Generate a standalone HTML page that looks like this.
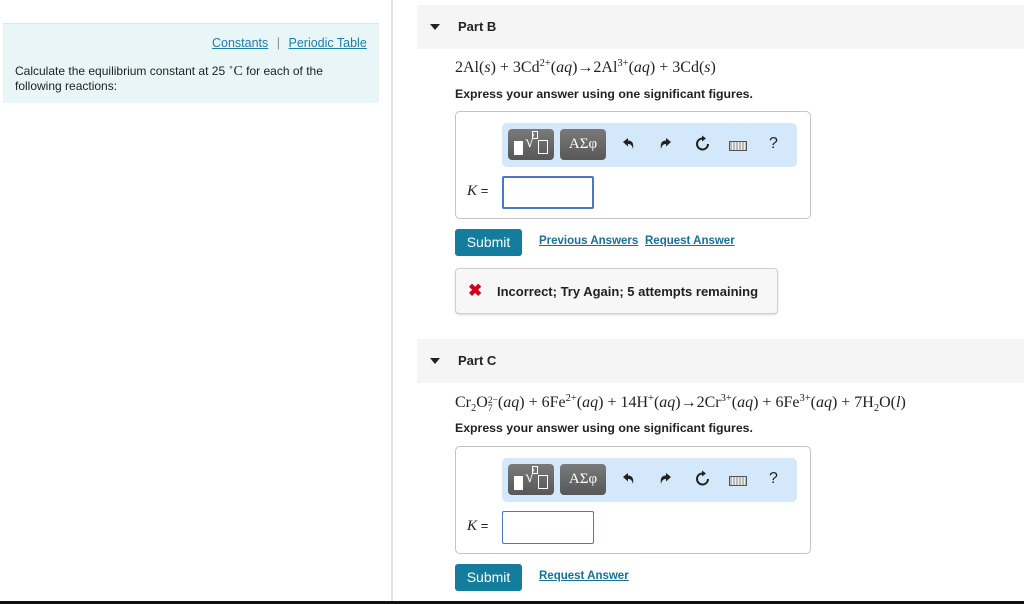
<!DOCTYPE html>
<html><head><meta charset="utf-8"><style>
*{margin:0;padding:0;box-sizing:border-box}
body{width:1024px;height:604px;background:#fff;font-family:"Liberation Sans",Arial,sans-serif;position:relative;overflow:hidden;color:#222}
.abs{position:absolute}
.left{left:3px;top:23px;width:376px;height:80px;background:#e8f6f7;border-top:1px solid #d6e8ea}
.lnk{color:#1a7fa8;text-decoration:underline}
.div{left:391px;top:0;width:2px;height:601px;background:#dde3ec}
.bot{left:0;top:601px;width:1024px;height:3px;background:#111}
.hdr{left:417px;width:607px;height:44px;background:#f5f5f5}
.tri{width:0;height:0;border-left:5px solid transparent;border-right:5px solid transparent;border-top:6px solid #222}
.ptitle{font-weight:bold;font-size:13px}
.eq{font-family:"Liberation Serif",serif;font-size:16px;white-space:nowrap}
.eq sup{font-size:10.5px;vertical-align:6px;line-height:0}
.eq sub{font-size:10.5px;line-height:0}
.eq i{font-style:italic}
.exp{font-weight:bold;font-size:12.3px}
.box{left:455px;width:356px;height:108px;border:1px solid #c4c4c4;border-radius:5px;background:#fff}
.tb{left:46px;top:11px;width:295px;height:44px;background:#d3e8fb;border-radius:5px}
.btn{top:6px;width:46px;height:31px;border-radius:4px;background:linear-gradient(#7a7a7a,#575757);color:#fff}
.ic{top:12px;font-size:17px;color:#222}
.k{left:11px;font-family:"Liberation Serif",serif;font-style:italic;font-size:15px}
.inp{left:46px;width:92px;height:33px;border:2px solid #4a78c9;border-radius:2px;background:#fff}
.sub{left:455px;width:67px;height:27px;background:#147c9c;border-radius:3px;color:#fff;font-size:14px;text-align:center;line-height:27px}
.al{font-weight:bold;font-size:11.5px;color:#1a6f96;text-decoration:underline}
</style></head><body>
<div class="abs left">
 <div class="abs" style="left:209px;top:12px;font-size:12.5px"><span class="lnk">Constants</span> <span style="color:#888;margin:0 5px">|</span> <span class="lnk">Periodic Table</span></div>
 <div class="abs" style="left:12px;top:36px;font-size:12px;line-height:15px;color:#222">Calculate the equilibrium constant at 25 <sup style="font-size:8px">∘</sup><span style="font-family:'Liberation Serif',serif;font-size:14px">C</span> for each of the<br>following reactions:</div>
</div>
<div class="abs div"></div>
<div class="abs bot"></div>

<!-- Part B -->
<div class="abs hdr" style="top:5px"><div class="abs tri" style="left:13px;top:19px"></div><div class="abs ptitle" style="left:41px;top:14px">Part B</div></div>
<div class="abs eq" style="left:455px;top:59px">2Al(<i>s</i>) + 3Cd<sup>2+</sup>(<i>aq</i>)→2Al<sup>3+</sup>(<i>aq</i>) + 3Cd(<i>s</i>)</div>
<div class="abs exp" style="left:455px;top:87px">Express your answer using one significant figures.</div>
<div class="abs box" style="top:111px">
 <div class="abs tb">
  <div class="abs btn" style="left:6px"><div class="abs" style="left:6px;top:12px;width:9px;height:14px;background:#fff"></div><div class="abs" style="left:17px;top:3px;font-size:17px;font-family:'Liberation Serif',serif">√</div><div class="abs" style="left:24px;top:2px;width:6px;height:8px;border:1px solid #fff"></div><div class="abs" style="left:30px;top:11px;width:10px;height:14px;border:1px solid #fff"></div></div>
  <div class="abs btn" style="left:58px;font-family:'Liberation Serif',serif;font-size:15px;text-align:center;line-height:31px">ΑΣφ</div>
  <svg class="abs" style="left:120px;top:14px" width="14" height="14" viewBox="0 0 14 14"><path d="M1 5 L6 1 L6 3.5 C10 3.5 12 6 11 12 C10 8 8.5 7 6 7 L6 9.5 Z" fill="#222"/></svg>
  <svg class="abs" style="left:156px;top:14px" width="14" height="14" viewBox="0 0 14 14"><path d="M13 5 L8 1 L8 3.5 C4 3.5 2 6 3 12 C4 8 5.5 7 8 7 L8 9.5 Z" fill="#222"/></svg>
  <svg class="abs" style="left:192px;top:12px" width="18" height="18" viewBox="0 0 18 18"><path d="M14 9 A5.5 5.5 0 1 1 9 3.5" fill="none" stroke="#222" stroke-width="2"/><path d="M8 0.5 L12 3.5 L8 6.5 Z" fill="#222"/></svg>
  <div class="abs" style="left:227px;top:18px;width:18px;height:10px;border:1px solid #555;background:repeating-linear-gradient(90deg,#bbb 0 2px,#eee 2px 3px)"></div>
  <div class="abs ic" style="left:267px;font-size:16px">?</div>
 </div>
 <div class="abs k" style="top:71px">K <span style="font-style:normal;font-family:'Liberation Sans';font-size:13px">=</span></div>
 <div class="abs inp" style="top:64px"></div>
</div>
<div class="abs sub" style="top:229px">Submit</div>
<div class="abs al" style="left:539px;top:235px">Previous Answers</div>
<div class="abs al" style="left:645px;top:235px">Request Answer</div>
<div class="abs" style="left:455px;top:268px;width:323px;height:46px;border:1px solid #d0d0d0;border-radius:4px;background:#f7f7f7;box-shadow:0 1px 2px rgba(0,0,0,.15)">
 <div class="abs" style="left:12px;top:12px;color:#d0021b;font-weight:bold;font-size:17px">✖</div>
 <div class="abs" style="left:41px;top:15px;font-weight:bold;font-size:13px">Incorrect; Try Again; 5 attempts remaining</div>
</div>

<!-- Part C -->
<div class="abs hdr" style="top:339px"><div class="abs tri" style="left:13px;top:19px"></div><div class="abs ptitle" style="left:41px;top:14px">Part C</div></div>
<div class="abs eq" style="left:455px;top:394px">Cr<sub>2</sub>O<span style="display:inline-block;font-size:9.5px;line-height:8px;vertical-align:-4px;text-align:left">2−<br>7</span>(<i>aq</i>) + 6Fe<sup>2+</sup>(<i>aq</i>) + 14H<sup>+</sup>(<i>aq</i>)→2Cr<sup>3+</sup>(<i>aq</i>) + 6Fe<sup>3+</sup>(<i>aq</i>) + 7H<sub>2</sub>O(<i>l</i>)</div>
<div class="abs exp" style="left:455px;top:421px">Express your answer using one significant figures.</div>
<div class="abs box" style="top:446px">
 <div class="abs tb">
  <div class="abs btn" style="left:6px"><div class="abs" style="left:6px;top:12px;width:9px;height:14px;background:#fff"></div><div class="abs" style="left:17px;top:3px;font-size:17px;font-family:'Liberation Serif',serif">√</div><div class="abs" style="left:24px;top:2px;width:6px;height:8px;border:1px solid #fff"></div><div class="abs" style="left:30px;top:11px;width:10px;height:14px;border:1px solid #fff"></div></div>
  <div class="abs btn" style="left:58px;font-family:'Liberation Serif',serif;font-size:15px;text-align:center;line-height:31px">ΑΣφ</div>
  <svg class="abs" style="left:120px;top:14px" width="14" height="14" viewBox="0 0 14 14"><path d="M1 5 L6 1 L6 3.5 C10 3.5 12 6 11 12 C10 8 8.5 7 6 7 L6 9.5 Z" fill="#222"/></svg>
  <svg class="abs" style="left:156px;top:14px" width="14" height="14" viewBox="0 0 14 14"><path d="M13 5 L8 1 L8 3.5 C4 3.5 2 6 3 12 C4 8 5.5 7 8 7 L8 9.5 Z" fill="#222"/></svg>
  <svg class="abs" style="left:192px;top:12px" width="18" height="18" viewBox="0 0 18 18"><path d="M14 9 A5.5 5.5 0 1 1 9 3.5" fill="none" stroke="#222" stroke-width="2"/><path d="M8 0.5 L12 3.5 L8 6.5 Z" fill="#222"/></svg>
  <div class="abs" style="left:227px;top:18px;width:18px;height:10px;border:1px solid #555;background:repeating-linear-gradient(90deg,#bbb 0 2px,#eee 2px 3px)"></div>
  <div class="abs ic" style="left:267px;font-size:16px">?</div>
 </div>
 <div class="abs k" style="top:71px">K <span style="font-style:normal;font-family:'Liberation Sans';font-size:13px">=</span></div>
 <div class="abs inp" style="top:64px;border:1px solid #4a78c9"></div>
</div>
<div class="abs sub" style="top:564px">Submit</div>
<div class="abs al" style="left:539px;top:570px">Request Answer</div>
</body></html>
